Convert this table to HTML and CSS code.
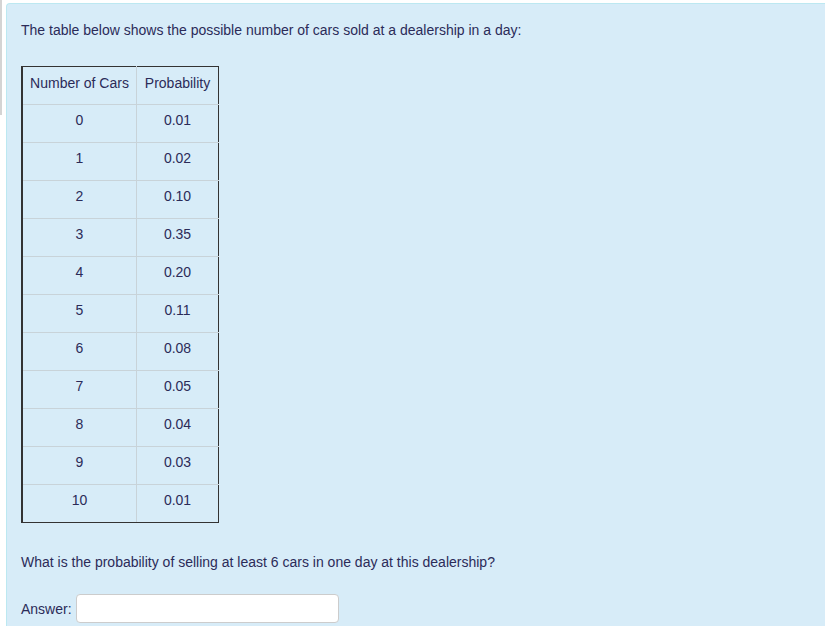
FILE: index.html
```html
<!DOCTYPE html>
<html>
<head>
<meta charset="utf-8">
<link rel="stylesheet" href="styles.css">
</head>
<body>
<div class="page">
  <div class="strip"></div>
  <div class="panel">
    <p class="intro">The table below shows the possible number of cars sold at a dealership in a day:</p>
    <table class="prob">
      <tr><th>Number of Cars</th><th>Probability</th></tr>
      <tr><td>0</td><td>0.01</td></tr>
      <tr><td>1</td><td>0.02</td></tr>
      <tr><td>2</td><td>0.10</td></tr>
      <tr><td>3</td><td>0.35</td></tr>
      <tr><td>4</td><td>0.20</td></tr>
      <tr><td>5</td><td>0.11</td></tr>
      <tr><td>6</td><td>0.08</td></tr>
      <tr><td>7</td><td>0.05</td></tr>
      <tr><td>8</td><td>0.04</td></tr>
      <tr><td>9</td><td>0.03</td></tr>
      <tr><td>10</td><td>0.01</td></tr>
    </table>
    <p class="question">What is the probability of selling at least 6 cars in one day at this dealership?</p>
    <div class="answer">
      <label class="answer-label">Answer:</label>
      <input class="answer-input" type="text">
    </div>
  </div>
</div>
</body>
</html>
```
FILE: styles.css
```css
html, body {
  margin: 0;
  padding: 0;
  background: #ffffff;
}
body {
  font-family: "Liberation Sans", Arial, sans-serif;
  font-size: 14px;
  line-height: 20px;
  color: #2b2b58;
}
.page {
  display: flex;
  align-items: flex-start;
  height: 626px;
  overflow: hidden;
}
.strip {
  width: 2px;
  height: 115px;
  background: #d4d4d4;
  margin-right: 4px;
  flex: none;
}
.panel {
  flex: 1;
  margin-top: 3px;
  background: #d7ecf8;
  border: 1px solid #bce8f1;
  border-right: none;
  border-bottom: none;
  border-top-left-radius: 4px;
  padding: 16px 14px 40px 14px;
  min-height: 640px;
}
.intro {
  margin: 0;
}
.prob {
  margin-top: 26px;
  border-collapse: collapse;
  border: 1px solid #333333;
  border-left: 2px solid #333333;
}
.prob th, .prob td {
  font-weight: normal;
  text-align: center;
  padding: 5px 6px 12px 6px;
  border: 1px solid #c8d3d9;
  height: 20px;
}
.prob th {
  padding-top: 6px;
  padding-bottom: 11px;
}
.prob tr:first-child th {
  border-top: 1px solid #333333;
}
.prob th:first-child, .prob td:first-child {
  width: 101px;
  border-left: 2px solid #333333;
}
.prob th:last-child, .prob td:last-child {
  width: 69px;
  border-right: 1px solid #333333;
}
.prob tr:last-child td {
  border-bottom: 1px solid #333333;
}
.question {
  margin: 29px 0 0 0;
}
.answer {
  display: flex;
  align-items: center;
  gap: 4px;
  margin-top: 22px;
}
.answer-input {
  width: 263px;
  height: 29px;
  box-sizing: border-box;
  border: 1px solid #cccccc;
  border-radius: 4px;
  background: #ffffff;
  margin: 0;
}
```
